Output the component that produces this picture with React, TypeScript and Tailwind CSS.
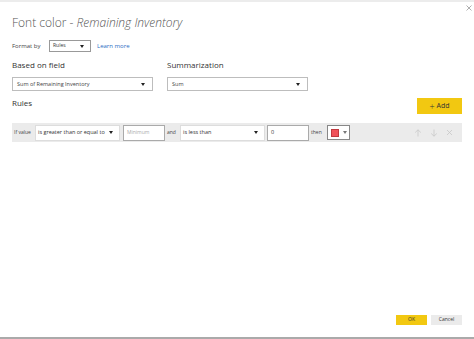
const font = { fontFamily: '"Open Sans", "Noto Sans", sans-serif' };

// small black triangle used by the dropdowns
const Caret = ({ color = '#222' }: { color?: string }) => (
  <svg width="4" height="3" viewBox="0 0 4 3" className="shrink-0">
    <path d="M0 0 L4 0 L2 3 Z" fill={color} />
  </svg>
);

const Select = ({ label, w }: { label: string; w: string }) => (
  <div className={`${w} h-[14px] border border-[#bdbdbd] bg-white flex items-center justify-between pl-[4px] pr-[7px]`}>
    <span className="text-[5.5px] text-[#444]">{label}</span>
    <Caret />
  </div>
);

export default function App() {
  return (
    <div className="w-[474px] h-[339px] bg-white flex flex-col relative overflow-hidden text-[#333]" style={font}>
      <div className="h-[2px] bg-[#ececec]" />

      {/* close */}
      <svg width="6" height="6" viewBox="0 0 6 6" className="absolute left-[466px] top-[5px]">
        <path d="M0.5 0.5 L5.5 5.5 M5.5 0.5 L0.5 5.5" stroke="#999" strokeWidth="0.8" />
      </svg>

      <div className="flex-1 px-[12px] flex flex-col">
        <h1 className="mt-[13px] text-[12px] leading-[16px] font-light text-[#555]">
          Font color - <span className="italic">Remaining Inventory</span>
        </h1>

        <div className="mt-[9px] flex items-center h-[12px]">
          <span className="text-[6px] text-[#444] w-[37px]">Format by</span>
          <div className="w-[42px] h-[12px] border border-[#999] flex items-center justify-between pl-[3px] pr-[6px]">
            <span className="text-[5px] text-[#333]">Rules</span>
            <Caret />
          </div>
          <span className="ml-[6px] text-[6px] text-[#2b6cc4]">Learn more</span>
        </div>

        <div className="mt-[7px] flex">
          <div className="w-[155px]">
            <div className="text-[8px] leading-[12px] text-[#333]">Based on field</div>
            <div className="mt-[6px]">
              <Select label="Sum of Remaining Inventory" w="w-[141px]" />
            </div>
          </div>
          <div>
            <div className="text-[8px] leading-[12px] text-[#333]">Summarization</div>
            <div className="mt-[6px]">
              <Select label="Sum" w="w-[141px]" />
            </div>
          </div>
        </div>

        <div className="flex items-end justify-between mt-[6px]">
          <span className="text-[8px] leading-[12px] text-[#333] mb-[5px]">Rules</span>
          <button className="w-[45px] h-[16px] bg-[#f2c811] flex items-center justify-center gap-[2px] text-[7px] text-[#333]">
            <span className="text-[9px] leading-none font-light">+</span>
            <span>Add</span>
          </button>
        </div>

        <div className="mt-[9px] h-[19px] bg-[#ebebeb] flex items-center">
          <span className="w-[23px] pl-[2px] text-[5px] text-[#444]">If value</span>
          <div className="w-[85px] h-[16px] bg-white border border-[#ddd] flex items-center justify-between pl-[2px] pr-[6px]">
            <span className="text-[5.5px] text-[#333]">is greater than or equal to</span>
            <Caret />
          </div>
          <div className="ml-[3px] w-[42px] h-[16px] bg-white border border-[#aaa] flex items-center pl-[3px]">
            <span className="text-[5px] text-[#aaa]">Minimum</span>
          </div>
          <span className="ml-[2px] w-[13px] text-[5px] text-[#444]">and</span>
          <div className="w-[85px] h-[16px] bg-white border border-[#ddd] flex items-center justify-between pl-[2px] pr-[6px]">
            <span className="text-[5.5px] text-[#333]">is less than</span>
            <Caret />
          </div>
          <div className="ml-[2px] w-[42px] h-[16px] bg-white border border-[#aaa] flex items-center pl-[3px]">
            <span className="text-[5.5px] text-[#333]">0</span>
          </div>
          <span className="ml-[2px] w-[16px] text-[5px] text-[#444]">then</span>
          <div className="w-[23px] h-[15px] bg-white border border-[#888] flex items-center pl-[3px] gap-[4px]">
            <div className="w-[8px] h-[8px] bg-[#f0525a] border border-[#c03a40]" />
            <Caret color="#777" />
          </div>
          <div className="ml-auto flex items-center gap-[8px] pr-[9px]">
            <svg width="8" height="8" viewBox="0 0 8 8"><path d="M4 7.5 V0.8 M1.2 3.5 L4 0.8 L6.8 3.5" stroke="#c8c8c8" strokeWidth="0.8" fill="none" /></svg>
            <svg width="8" height="8" viewBox="0 0 8 8"><path d="M4 0.5 V7.2 M1.2 4.5 L4 7.2 L6.8 4.5" stroke="#c8c8c8" strokeWidth="0.8" fill="none" /></svg>
            <svg width="7" height="7" viewBox="0 0 7 7"><path d="M1 1 L6 6 M6 1 L1 6" stroke="#c8c8c8" strokeWidth="0.8" fill="none" /></svg>
          </div>
        </div>

        <div className="mt-auto mb-[12px] flex justify-end gap-[4px]">
          <button className="w-[31px] h-[10px] bg-[#f2c811] text-[5px] text-[#333] flex items-center justify-center">OK</button>
          <button className="w-[31px] h-[10px] bg-[#ebebeb] text-[5px] text-[#333] flex items-center justify-center">Cancel</button>
        </div>
      </div>

      <div className="h-[2px] bg-[#aaaaaa]" />
    </div>
  );
}
